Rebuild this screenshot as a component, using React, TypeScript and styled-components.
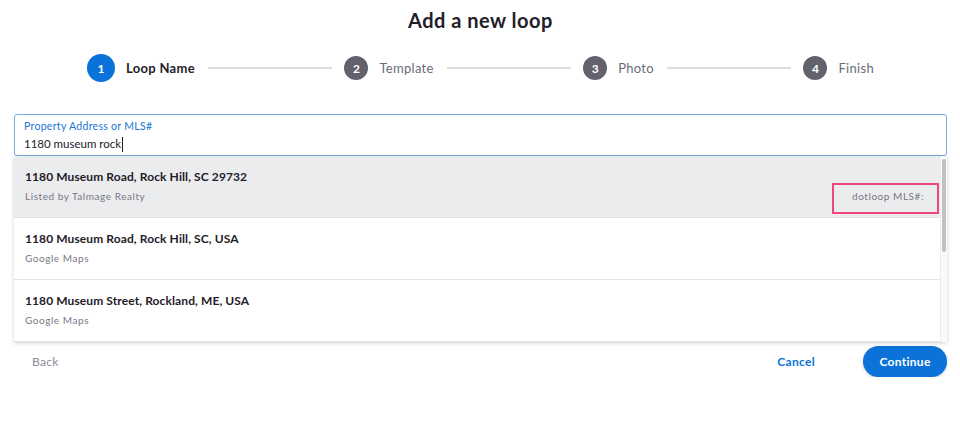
import styled, { createGlobalStyle } from 'styled-components';

const GlobalStyle = createGlobalStyle`
  html, body {
    margin: 0;
    padding: 0;
    background: #ffffff;
    font-family: Lato, "Open Sans", Arial, sans-serif;
    color: #1f2029;
  }
  * {
    box-sizing: border-box;
  }
`;

const steps = [
  { number: 1, label: 'Loop Name' },
  { number: 2, label: 'Template' },
  { number: 3, label: 'Photo' },
  { number: 4, label: 'Finish' },
];

const suggestions = [
  { title: '1180 Museum Road, Rock Hill, SC 29732', source: 'Listed by Talmage Realty', mls: true },
  { title: '1180 Museum Road, Rock Hill, SC, USA', source: 'Google Maps' },
  { title: '1180 Museum Street, Rockland, ME, USA', source: 'Google Maps' },
];

export default function App() {
  const active = 1;
  // list is scrolled to the top, thumb covers about half the track
  const thumb = { top: 3, height: 93 };

  return (
    <>
      <GlobalStyle />
      <Page>
        <Title>Add a new loop</Title>
        <Stepper>
          {steps.map(({ number, label }, index) => (
            <StepGroup key={number} last={index === steps.length - 1}>
              <Step>
                <Circle active={number === active}>{number}</Circle>
                <StepLabel active={number === active}>{label}</StepLabel>
              </Step>
              {index < steps.length - 1 ? <Line /> : null}
            </StepGroup>
          ))}
        </Stepper>

        <Field>
          <FieldLabel>Property Address or MLS#</FieldLabel>
          <FieldValue>
            1180 museum rock
            <Caret />
          </FieldValue>
        </Field>

        <Dropdown>
          <OptionList>
            {suggestions.map(({ title, source, mls }, index) => (
              <Option key={title} highlighted={index === 0}>
                <OptionTitle>{title}</OptionTitle>
                <OptionMeta>
                  <span>{source}</span>
                  {mls ? (
                    <MlsTag>
                      dotloop MLS#:
                      <Highlight />
                    </MlsTag>
                  ) : null}
                </OptionMeta>
              </Option>
            ))}
          </OptionList>
          <ScrollTrack>
            <ScrollThumb style={{ marginTop: thumb.top, height: thumb.height }} />
          </ScrollTrack>
        </Dropdown>

        <Footer>
          <BackButton>Back</BackButton>
          <Actions>
            <CancelButton>Cancel</CancelButton>
            <ContinueButton>Continue</ContinueButton>
          </Actions>
        </Footer>
      </Page>
    </>
  );
}

const Page = styled.div`
  padding: 0 13px 0 14px;
`;

const Title = styled.h1`
  margin: 0;
  padding-top: 8px;
  font-size: 20px;
  line-height: 24px;
  font-weight: 700;
  text-align: center;
  letter-spacing: 0.5px;
  color: #1f2029;
`;

const Stepper = styled.div`
  display: flex;
  align-items: center;
  width: 787px;
  margin: 21px auto 0;
  height: 30px;
`;

const StepGroup = styled.div<{ last?: boolean }>`
  display: flex;
  align-items: center;
  flex: ${({ last }) => (last ? '0 0 auto' : '1 1 auto')};
`;

const Step = styled.div`
  display: flex;
  align-items: center;
  gap: 11px;
`;

const Circle = styled.div<{ active?: boolean }>`
  display: flex;
  align-items: center;
  justify-content: center;
  width: ${({ active }) => (active ? '28px' : '24px')};
  height: ${({ active }) => (active ? '28px' : '24px')};
  border-radius: 50%;
  background: ${({ active }) => (active ? '#0b72d9' : '#62626c')};
  color: #ffffff;
  font-size: 12px;
  font-weight: 700;
`;

const StepLabel = styled.span<{ active?: boolean }>`
  font-size: 13px;
  font-weight: ${({ active }) => (active ? 700 : 400)};
  color: ${({ active }) => (active ? '#1f2029' : '#6a6b76')};
  letter-spacing: 0.3px;
  white-space: nowrap;
`;

const Line = styled.div`
  flex: 1;
  height: 2px;
  margin: 0 12px 0 13px;
  background: #dcdde0;
`;

const Field = styled.div`
  margin-top: 31px;
  height: 42px;
  padding: 5px 9px 0;
  border: 1px solid #78a8e2;
  border-radius: 3px;
  background: #ffffff;
`;

const FieldLabel = styled.div`
  font-size: 10.5px;
  line-height: 13px;
  color: #1a75d6;
  letter-spacing: 0.3px;
`;

const FieldValue = styled.div`
  display: flex;
  align-items: center;
  margin-top: 3px;
  font-size: 11.5px;
  line-height: 16px;
  color: #1f2029;
`;

const Caret = styled.span`
  display: inline-block;
  width: 1px;
  height: 15px;
  margin-left: 1px;
  background: #1f2029;
`;

const Dropdown = styled.div`
  display: flex;
  height: 186px;
  background: #ffffff;
  box-shadow: 0 1px 4px rgba(40, 45, 70, 0.22);
`;

const OptionList = styled.div`
  flex: 1;
  min-width: 0;
`;

const ScrollTrack = styled.div`
  width: 7px;
  padding: 0 1px 0 1px;
  background: #fafafa;
  border-left: 1px solid #ececec;
`;

const ScrollThumb = styled.div`
  width: 100%;
  border-radius: 3px;
  background: #c1c1c1;
`;

const Option = styled.div<{ highlighted?: boolean }>`
  position: relative;
  height: 62px;
  padding: 13px 16px 0 11px;
  border-bottom: 1px solid #e2e3e6;
  background: ${({ highlighted }) => (highlighted ? '#ebecee' : '#ffffff')};
`;

const OptionTitle = styled.div`
  font-size: 12px;
  line-height: 16px;
  font-weight: 700;
  color: #1f2029;
  letter-spacing: 0.1px;
`;

const OptionMeta = styled.div`
  display: flex;
  justify-content: space-between;
  margin-top: 4px;
  font-size: 10px;
  line-height: 14px;
  color: #777885;
  letter-spacing: 0.55px;
`;

const MlsTag = styled.span`
  position: relative;
`;

const Highlight = styled.span`
  position: absolute;
  left: -20px;
  right: -15px;
  top: -6px;
  bottom: -11px;
  border: 2px solid #f0467c;
`;

const Footer = styled.div`
  display: flex;
  align-items: center;
  justify-content: space-between;
  margin-top: 4px;
`;

const BackButton = styled.button`
  padding: 0 18px;
  border: 0;
  background: none;
  font-family: inherit;
  font-size: 12px;
  color: #8a8c9c;
  letter-spacing: 0.3px;
`;

const Actions = styled.div`
  display: flex;
  align-items: center;
  gap: 34px;
`;

const CancelButton = styled.button`
  padding: 0 14px;
  border: 0;
  background: none;
  font-family: inherit;
  font-size: 12px;
  font-weight: 700;
  color: #0b72d9;
  letter-spacing: 0.3px;
`;

const ContinueButton = styled.button`
  width: 84px;
  height: 31px;
  border: 0;
  border-radius: 16px;
  background: #0b72d9;
  box-shadow: 0 1px 3px rgba(0, 0, 0, 0.2);
  font-family: inherit;
  font-size: 12px;
  font-weight: 700;
  color: #ffffff;
  letter-spacing: 0.3px;
`;
